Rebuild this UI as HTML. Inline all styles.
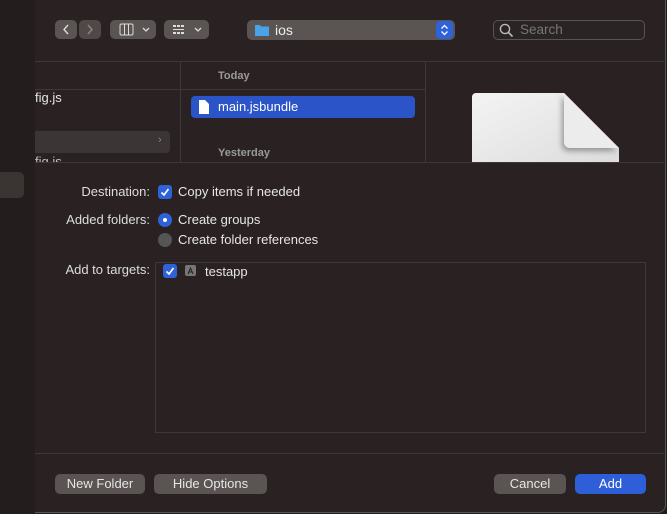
<!DOCTYPE html>
<html><head><style>
*{margin:0;padding:0;box-sizing:border-box}
body{width:667px;height:514px;background:#231d1d;font-family:"Liberation Sans",sans-serif;color:#ddd;position:relative;overflow:hidden;font-size:13px}
.a{position:absolute}
.btn{position:absolute;background:#5a5452;border-radius:5px;color:#e6e6e6;text-align:center;font-size:13px;line-height:20px;height:20px}
</style></head><body>
<div class="a" style="left:35px;top:0;width:631px;height:513px;background:#2a2222;border-right:1px solid #555;border-bottom:1px solid #555;border-bottom-right-radius:8px"></div>
<div class="a" style="left:0;top:172px;width:24px;height:26px;background:#3a3433;border-radius:0 5px 5px 0"></div>
<!-- toolbar -->
<div class="btn" style="left:55px;top:20px;width:22px;height:19px"></div>
<div class="btn" style="left:79px;top:20px;width:22px;height:19px;opacity:.8"></div>
<svg class="a" style="left:55px;top:20px" width="46" height="19"><path d="M13 5l-4 4.5 4 4.5" stroke="#ddd" stroke-width="1.4" fill="none"/><path d="M33 5l4 4.5-4 4.5" stroke="#888" stroke-width="1.4" fill="none"/></svg>
<div class="btn" style="left:110px;top:20px;width:46px;height:19px"></div>
<svg class="a" style="left:110px;top:20px" width="46" height="19"><rect x="10" y="4" width="13" height="11" rx="1.5" stroke="#ddd" fill="none"/><path d="M14.5 4v11M18.5 4v11" stroke="#ddd"/><path d="M33 8l3 3 3-3" stroke="#ddd" fill="none" stroke-width="1.3"/></svg>
<div class="btn" style="left:164px;top:20px;width:45px;height:19px"></div>
<svg class="a" style="left:164px;top:20px" width="45" height="19"><g fill="#ddd"><rect x="9" y="5" width="3" height="2"/><rect x="13" y="5" width="3" height="2"/><rect x="17" y="5" width="3" height="2"/><rect x="9" y="9" width="11" height="1"/><rect x="9" y="12" width="3" height="2"/><rect x="13" y="12" width="3" height="2"/><rect x="17" y="12" width="3" height="2"/></g><path d="M31 8l3 3 3-3" stroke="#ddd" fill="none" stroke-width="1.3"/></svg>
<div class="btn" style="left:247px;top:20px;width:208px;height:20px"></div>
<svg class="a" style="left:255px;top:23px" width="14" height="14"><path d="M0 2h5l1 1.5h8V13H0z" fill="#4aa3e8"/></svg>
<div class="a" style="left:275px;top:22px;font-size:14px;color:#eee">ios</div>
<div class="a" style="left:436px;top:21px;width:17px;height:18px;background:#2e62d8;border-radius:4px"></div>
<svg class="a" style="left:436px;top:21px" width="17" height="18"><path d="M5.5 7.5l3-3 3 3M5.5 10.5l3 3 3-3" stroke="#fff" fill="none" stroke-width="1.3"/></svg>
<div class="a" style="left:493px;top:20px;width:152px;height:20px;border:1px solid #555;border-radius:5px;background:#2b2424"></div>
<svg class="a" style="left:499px;top:23px" width="15" height="15"><circle cx="6" cy="6" r="4.6" stroke="#bbb" stroke-width="1.4" fill="none"/><path d="M9.5 9.5l4 4" stroke="#bbb" stroke-width="1.6"/></svg>
<div class="a" style="left:520px;top:22px;color:#777;font-size:13.5px">Search</div>
<!-- browser -->
<div class="a" style="left:35px;top:61px;width:631px;height:1px;background:#3e3838"></div>
<div class="a" style="left:35px;top:89px;width:390px;height:1px;background:#3e3838"></div>
<div class="a" style="left:180px;top:62px;width:1px;height:100px;background:#3e3838"></div>
<div class="a" style="left:425px;top:62px;width:1px;height:100px;background:#3e3838"></div>
<div class="a" style="left:35px;top:90px;font-size:13px;color:#e6e6e6">fig.js</div>
<div class="a" style="left:35px;top:131px;width:135px;height:22px;background:#3b3535;border-radius:0 4px 4px 0"></div>
<div class="a" style="left:158px;top:134px;color:#888;font-size:11px">›</div>
<div class="a" style="left:35px;top:154px;font-size:13px;color:#bbb;height:8px;overflow:hidden">fig.js</div>
<div class="a" style="left:218px;top:70px;font-size:11px;color:#999;font-weight:bold">Today</div>
<div class="a" style="left:191px;top:96px;width:224px;height:22px;background:#2a54c8;border-radius:4px"></div>
<svg class="a" style="left:198px;top:99px" width="12" height="16"><path d="M1 1h6l4 4v10H1z" fill="#fff"/></svg>
<div class="a" style="left:218px;top:99px;font-size:13px;color:#fff">main.jsbundle</div>
<div class="a" style="left:218px;top:147px;font-size:11px;color:#999;font-weight:bold">Yesterday</div>
<svg class="a" style="left:470px;top:92px" width="152" height="70"><defs><linearGradient id="g" x1="0" y1="0" x2="1" y2="1"><stop offset="0" stop-color="#f4f4f4"/><stop offset="1" stop-color="#dcdcdc"/></linearGradient><filter id="s" x="-50%" y="-50%" width="200%" height="200%"><feDropShadow dx="-2" dy="3" stdDeviation="3" flood-opacity=".35"/></filter></defs><path d="M6 1H94L149 56V70H2V5a4 4 0 0 1 4-4z" fill="url(#g)"/><path d="M94 1V50a6 6 0 0 0 6 6H149z" fill="#ececec" filter="url(#s)"/></svg>
<div class="a" style="left:35px;top:162px;width:631px;height:1px;background:#3e3838"></div>
<!-- options -->
<div class="a" style="left:0;top:184px;width:150px;text-align:right;font-size:13px;color:#ddd">Destination:</div>
<div class="a" style="left:158px;top:185px;width:14px;height:14px;background:#2e62d8;border-radius:3px"></div>
<svg class="a" style="left:158px;top:185px" width="14" height="14"><path d="M3.5 7.5l2.5 2.5 4.5-6" stroke="#fff" stroke-width="1.7" fill="none"/></svg>
<div class="a" style="left:178px;top:184px;color:#e6e6e6">Copy items if needed</div>
<div class="a" style="left:0;top:212px;width:150px;text-align:right;color:#ddd">Added folders:</div>
<div class="a" style="left:158px;top:213px;width:14px;height:14px;background:#2e62d8;border-radius:50%"></div>
<div class="a" style="left:163px;top:218px;width:4px;height:4px;background:#fff;border-radius:50%"></div>
<div class="a" style="left:178px;top:212px;color:#e6e6e6">Create groups</div>
<div class="a" style="left:158px;top:233px;width:14px;height:14px;background:#555;border-radius:50%"></div>
<div class="a" style="left:178px;top:232px;color:#e6e6e6">Create folder references</div>
<div class="a" style="left:0;top:262px;width:150px;text-align:right;color:#ddd">Add to targets:</div>
<div class="a" style="left:155px;top:262px;width:491px;height:171px;border:1px solid #3e3838;background:#2a2222"></div>
<div class="a" style="left:163px;top:264px;width:14px;height:14px;background:#2e62d8;border-radius:3px"></div>
<svg class="a" style="left:163px;top:264px" width="14" height="14"><path d="M3.5 7.5l2.5 2.5 4.5-6" stroke="#fff" stroke-width="1.7" fill="none"/></svg>
<div class="a" style="left:185px;top:265px;width:11px;height:11px;background:#777;border-radius:2px"></div>
<svg class="a" style="left:185px;top:265px" width="11" height="11"><path d="M3 9l2.5-6 2.5 6M3.5 7h4" stroke="#222" stroke-width="1" fill="none"/></svg>
<div class="a" style="left:205px;top:264px;color:#e6e6e6">testapp</div>
<div class="a" style="left:35px;top:453px;width:631px;height:1px;background:#3e3838"></div>
<div class="btn" style="left:55px;top:474px;width:90px">New Folder</div>
<div class="btn" style="left:154px;top:474px;width:113px">Hide Options</div>
<div class="btn" style="left:494px;top:474px;width:72px">Cancel</div>
<div class="btn" style="left:575px;top:474px;width:71px;background:#2e5fd8;color:#fff">Add</div>
</body></html>
